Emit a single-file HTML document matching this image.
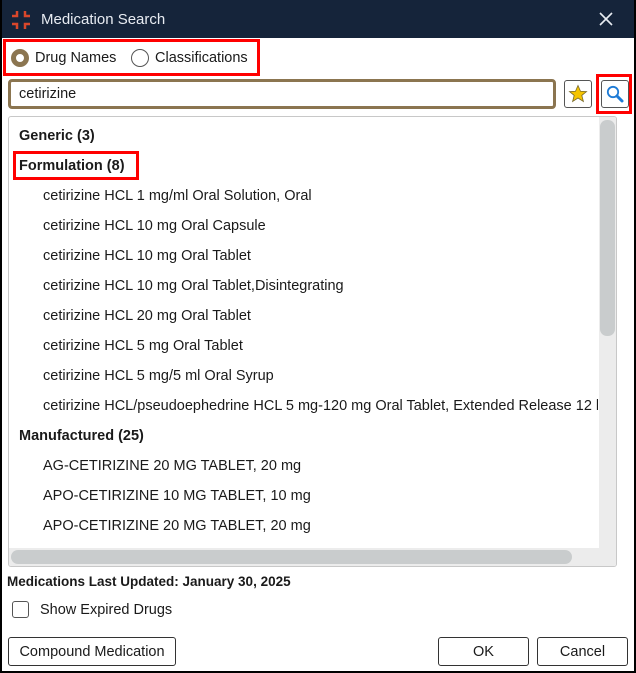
<!DOCTYPE html>
<html><head><style>
*{box-sizing:border-box;margin:0;padding:0}
body{width:636px;height:673px;background:#000;position:relative;overflow:hidden;font-family:"Liberation Sans",sans-serif;color:#1a1a1a}
.win{position:absolute;left:2px;top:0;width:632px;height:671px;background:#fff}
.title{position:absolute;left:0;top:0;width:632px;height:38px;background:#15243a;color:#e8ecf2;font-size:15px}
.abs{position:absolute}
.red{position:absolute;border:3px solid #f00}
.item{position:absolute;left:41px;font-size:14.5px;white-space:nowrap}
.hdr{position:absolute;left:17px;font-size:14.5px;font-weight:bold}
.btn{position:absolute;border:1px solid #333;border-radius:3px;background:#fff;font-size:14.5px;text-align:center;line-height:28px}
</style></head><body>
<div class="win">
<div class="title">
<svg class="abs" style="left:8px;top:9px" width="22" height="22" viewBox="0 0 22 22" fill="none" stroke="#d9472b" stroke-width="2.5">
<path d="M2 7H7V2M20 7H15V2M2 15H7V20M20 15H15V20"/></svg>
<div class="abs" style="left:39px;top:11px">Medication Search</div>
<svg class="abs" style="left:597px;top:12px" width="14" height="14" viewBox="0 0 14 14" stroke="#e8ecf2" stroke-width="1.6"><path d="M1 1L13 13M13 1L1 13"/></svg>
</div>
<div class="red" style="left:1px;top:39px;width:257px;height:37px"></div>
<div class="abs" style="left:9px;top:49px;width:18px;height:18px;border-radius:50%;border:5px solid #8b7550"></div>
<div class="abs" style="left:33px;top:50px;font-size:14.5px">Drug Names</div>
<div class="abs" style="left:129px;top:49px;width:18px;height:18px;border-radius:50%;border:1.5px solid #555"></div>
<div class="abs" style="left:153px;top:50px;font-size:14.5px">Classifications</div>
<div class="abs" style="left:6px;top:79px;width:548px;height:30px;border:3px solid #8b7550;border-radius:4px"></div>
<div class="abs" style="left:17px;top:86px;font-size:14.5px">cetirizine</div>
<div class="btn" style="left:562px;top:80px;width:28px;height:28px;border-color:#555"><svg width="20" height="20" viewBox="0 0 20 20" style="margin-top:3px"><path d="M10 1.5L12.5 7.3L18.5 7.6L13.8 11.4L15.4 17.5L10 14L4.6 17.5L6.2 11.4L1.5 7.6L7.5 7.3Z" fill="#f5c400" stroke="#7a6a2a" stroke-width="0.8"/></svg></div>
<div class="red" style="left:594px;top:74px;width:36px;height:40px"></div>
<div class="btn" style="left:599px;top:80px;width:28px;height:28px;border-color:#555"><svg width="20" height="20" viewBox="0 0 20 20" style="margin-top:3px"><circle cx="8" cy="8" r="5.2" fill="none" stroke="#1e7bd6" stroke-width="1.8"/><path d="M12 12L17 17" stroke="#1e7bd6" stroke-width="3" stroke-linecap="round"/></svg></div>
<div class="abs" style="left:6px;top:116px;width:609px;height:451px;border:1px solid #c8c8c8;border-radius:3px;overflow:hidden">
<div class="abs" style="left:590px;top:0;width:18px;height:450px;background:#ececec"></div>
<div class="abs" style="left:591px;top:3px;width:15px;height:216px;background:#c9cccd;border-radius:7px"></div>
<div class="abs" style="left:0;top:431px;width:590px;height:18px;background:#ececec"></div>
<div class="abs" style="left:2px;top:433px;width:561px;height:14px;background:#c9cccd;border-radius:7px"></div>
</div>
<div class="hdr" style="top:128px">Generic (3)</div>
<div class="red" style="left:11px;top:151px;width:126px;height:29px"></div>
<div class="hdr" style="top:158px">Formulation (8)</div>
<div class="item" style="top:188px">cetirizine HCL 1 mg/ml Oral Solution, Oral</div>
<div class="item" style="top:218px">cetirizine HCL 10 mg Oral Capsule</div>
<div class="item" style="top:248px">cetirizine HCL 10 mg Oral Tablet</div>
<div class="item" style="top:278px">cetirizine HCL 10 mg Oral Tablet,Disintegrating</div>
<div class="item" style="top:308px">cetirizine HCL 20 mg Oral Tablet</div>
<div class="item" style="top:338px">cetirizine HCL 5 mg Oral Tablet</div>
<div class="item" style="top:368px">cetirizine HCL 5 mg/5 ml Oral Syrup</div>
<div class="item" style="top:398px;width:555px;overflow:hidden">cetirizine HCL/pseudoephedrine HCL 5 mg-120 mg Oral Tablet, Extended Release 12 hr</div>
<div class="hdr" style="top:428px">Manufactured (25)</div>
<div class="item" style="top:458px">AG-CETIRIZINE 20 MG TABLET, 20 mg</div>
<div class="item" style="top:488px">APO-CETIRIZINE 10 MG TABLET, 10 mg</div>
<div class="item" style="top:518px">APO-CETIRIZINE 20 MG TABLET, 20 mg</div>
<div class="abs" style="left:5px;top:574px;font-size:13.5px;font-weight:bold">Medications Last Updated: January 30, 2025</div>
<div class="abs" style="left:10px;top:601px;width:17px;height:17px;border:1.5px solid #555;border-radius:3px"></div>
<div class="abs" style="left:38px;top:602px;font-size:14.5px">Show Expired Drugs</div>
<div class="btn" style="left:6px;top:637px;width:168px;height:29px">Compound Medication</div>
<div class="btn" style="left:436px;top:637px;width:91px;height:29px">OK</div>
<div class="btn" style="left:535px;top:637px;width:91px;height:29px">Cancel</div>
</div>
</body></html>
